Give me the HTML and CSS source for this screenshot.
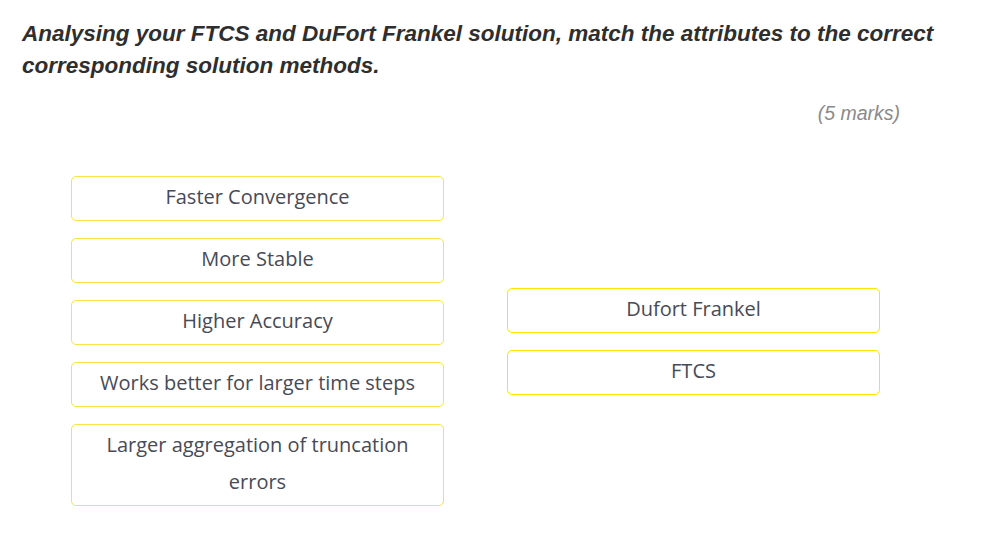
FILE: index.html
```html
<!DOCTYPE html>
<html>
<head>
<meta charset="utf-8">
<link rel="stylesheet" href="styles.css">
</head>
<body>
<div class="page">
  <h1 class="question">Analysing your FTCS and DuFort Frankel solution, match the attributes to the correct corresponding solution methods.</h1>
  <div class="marks">(5 marks)</div>
  <div class="match">
    <div class="col col-left">
      <div class="item">Faster Convergence</div>
      <div class="item">More Stable</div>
      <div class="item">Higher Accuracy</div>
      <div class="item">Works better for larger time steps</div>
      <div class="item">Larger aggregation of truncation errors</div>
    </div>
    <div class="col col-right">
      <div class="item target">Dufort Frankel</div>
      <div class="item target">FTCS</div>
    </div>
  </div>
</div>
</body>
</html>
```
FILE: styles.css
```css
html, body {
  margin: 0;
  padding: 0;
  background: #ffffff;
}
.page {
  padding: 18px 22px 0 22px;
}
.question {
  margin: 0;
  font-family: "Liberation Sans", Arial, sans-serif;
  font-weight: bold;
  font-style: italic;
  font-size: 22.5px;
  line-height: 32px;
  color: #2e2e2e;
  width: 940px;
}
.marks {
  font-family: "Liberation Sans", Arial, sans-serif;
  font-style: italic;
  font-size: 19.5px;
  color: #8a8a8a;
  text-align: right;
  width: 878px;
  margin-top: 18px;
  line-height: 26px;
}
.match {
  display: flex;
  gap: 63px;
  margin-top: 50px;
  padding-left: 49px;
}
.col {
  display: flex;
  flex-direction: column;
  gap: 17px;
  width: 373px;
}
.col-right {
  padding-top: 112px;
}
.item {
  box-sizing: border-box;
  border: 1px solid #f8e44a;
  border-radius: 5px;
  padding: 1px 16px 5px 16px;
  font-family: "Open Sans", sans-serif;
  font-size: 20px;
  line-height: 37px;
  color: #474a57;
  text-align: center;
}
.item.target {
  border-color: #ffe400;
}
```
